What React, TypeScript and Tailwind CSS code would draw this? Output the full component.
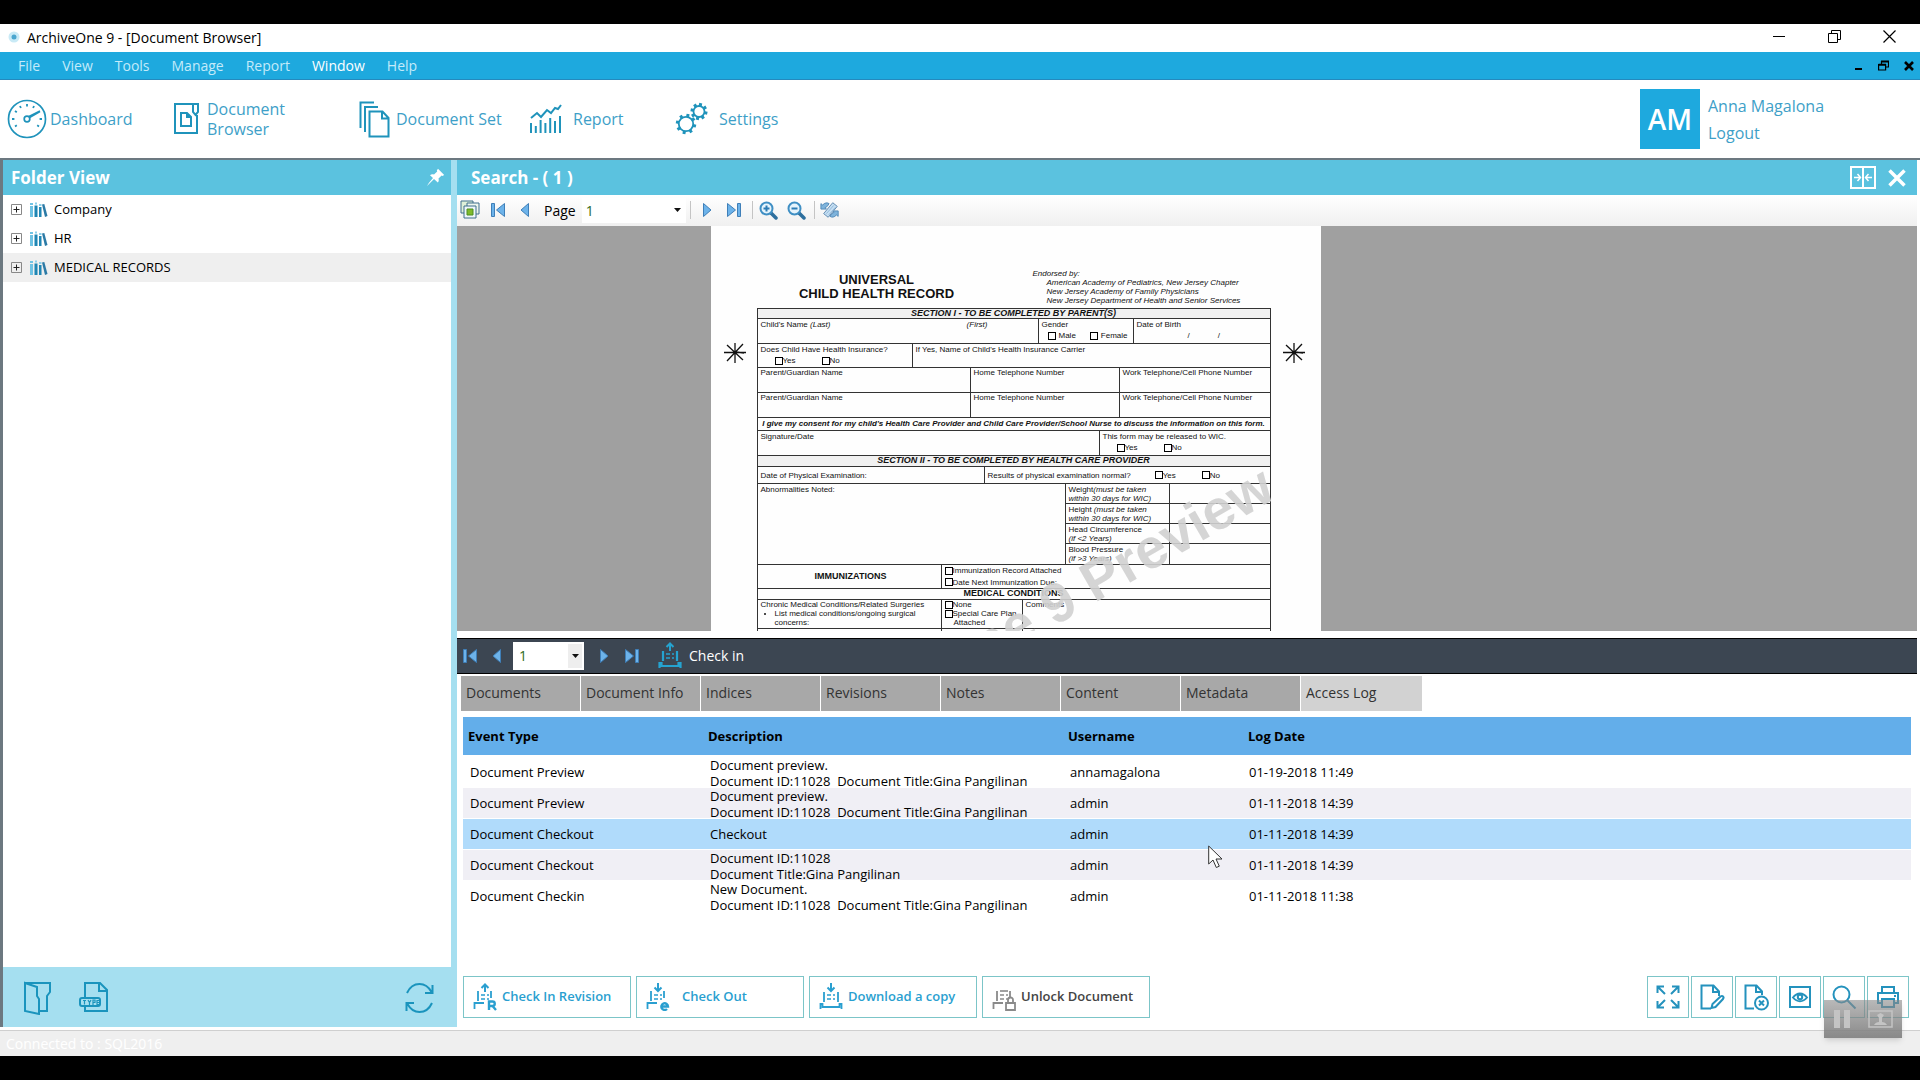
import React from "react";

type KidsProps = { children: React.ReactNode; className?: string };

/* ---------- icons ---------- */

function Svg({
  w,
  h,
  children,
  sw = 2,
  className = "",
}: {
  w: number;
  h: number;
  children: React.ReactNode;
  sw?: number;
  className?: string;
}) {
  return (
    <svg
      width={w}
      height={h}
      viewBox={`0 0 ${w} ${h}`}
      fill="none"
      stroke="currentColor"
      strokeWidth={sw}
      aria-hidden="true"
      className={`shrink-0 ${className}`}
    >
      {children}
    </svg>
  );
}

const GaugeIcon = () => (
  <Svg w={40} h={40} sw={1.7}>
    <circle cx="20" cy="20" r="18.5" />
    <circle cx="20" cy="20" r="2.8" />
    <path d="M22.5 18.5 33 12.5M22 17.5l11-5.5" />
    <path
      d="M20 5v2.4M13 7l.9 2M27 7l-.9 2M8 12l1.8 1.3M5 20h2.4M32.6 20H35M8 27.5l1.8-1.2M32 27.5l-1.8-1.2"
      strokeWidth="1.8"
    />
  </Svg>
);

const DocBrowserIcon = () => (
  <Svg w={28} h={34}>
    <path d="M20 2H2v29h22V13" />
    <path d="M20 2v8l2.5 3 2.5-3V2z" />
    <path d="M8 11h6l4 4v9H8zM14 11v4h4" />
  </Svg>
);

const DocSetIcon = () => (
  <Svg w={31} h={37}>
    <path d="M1.5 27V1.5H15M6 31V6h13" />
    <path d="M10.500 10.500h13l6 6.500v18.500h-19zM23 11v6.500h6" />
  </Svg>
);

const ReportIcon = () => (
  <Svg w={33} h={30}>
    <path d="M2 14l6-5 4 4 6-7 4 3 4-5 3 1 3-4" />
    <path d="M2 29V19M6.800 29v-7M11.600 29V16M16.400 29V19M21.200 29V14M26 29V17M31 29V12" />
  </Svg>
);

function Gear({ cx, cy, r }: { cx: number; cy: number; r: number }) {
  const teeth = [0, 45, 90, 135, 180, 225, 270, 315];
  return (
    <g>
      <circle cx={cx} cy={cy} r={r} />
      {teeth.map((a) => (
        <path
          key={a}
          d={`M${cx} ${cy - r}v-3`}
          strokeWidth="3"
          transform={`rotate(${a + 12} ${cx} ${cy})`}
        />
      ))}
    </g>
  );
}

const SettingsIcon = () => (
  <Svg w={34} h={34} sw={1.8}>
    <Gear cx={11} cy={22} r={7.200} />
    <Gear cx={24} cy={9.500} r={5.500} />
  </Svg>
);

const PinIcon = () => (
  <svg width="19" height="19" viewBox="0 0 19 19" fill="#fff" aria-hidden="true">
    <path d="M12 .8 18.200 7l-1.800.9-.8-.4-3.100 3.100c.5 1.600.3 3-.7 4L8 10.900 1 18l2-3.300L7 10 4 7.200c1-1 2.500-1.200 4-.7l3.200-3.100-.4-.9z" />
  </svg>
);

const BooksIcon = () => (
  <svg width="18" height="16" viewBox="0 0 18 16" aria-hidden="true" className="shrink-0">
    <path fill="#6fc3e4" d="M0 4h3v11H0zM0 1h3v2H0z" />
    <path fill="#1f86b4" d="M4.500 3.500h3V15h-3zM9 5h2.500v10H9z" />
    <path fill="#8bd0ea" d="M5 .5h2v2H5zM9 2h2.500v2H9z" />
    <path fill="#2b7aa6" d="m12 2.500 2.300-.6L17.500 14l-2.500 1z" />
  </svg>
);

const TwoWindowsIcon = () => (
  <svg width="20" height="20" viewBox="0 0 20 20" fill="none" aria-hidden="true">
    <path d="M1 1h12v12H1z" fill="#dff0d8" stroke="#3e6f8c" />
    <path d="M7 3h12v11H7z" fill="#eef6ee" stroke="#3e6f8c" />
    <path d="M4 6h12v12H4z" fill="#eef6fb" stroke="#3e6f8c" />
    <path d="M7 9h6v6H7z" fill="#7fba2c" stroke="#4c8d20" />
  </svg>
);

const FirstIcon = () => (
  <svg width="16" height="16" viewBox="0 0 16 16" className="shrink-0" aria-hidden="true">
    <path d="M1.500 1.500h3v13h-3zM14.500 1.500v13L6.500 8z" fill="#6db3ea" stroke="#3f7fb8" />
  </svg>
);
const PrevIcon = () => (
  <svg width="10" height="16" viewBox="0 0 10 16" className="shrink-0" aria-hidden="true">
    <path d="M8.500 1.500v13L1 8z" fill="#6db3ea" stroke="#3f7fb8" />
  </svg>
);
const NextIcon = () => (
  <svg width="10" height="16" viewBox="0 0 10 16" className="shrink-0" aria-hidden="true">
    <path d="M1.500 1.500v13L9 8z" fill="#6db3ea" stroke="#3f7fb8" />
  </svg>
);
const LastIcon = () => (
  <svg width="16" height="16" viewBox="0 0 16 16" className="shrink-0" aria-hidden="true">
    <path d="M11.500 1.500h3v13h-3zM1.500 1.500v13L9.500 8z" fill="#6db3ea" stroke="#3f7fb8" />
  </svg>
);

function ZoomGlass({ plus }: { plus: boolean }) {
  return (
    <svg width="19" height="19" viewBox="0 0 19 19" fill="none" aria-hidden="true">
      <path d="m12 12 5 5" stroke="#2d6f9e" strokeWidth="3.500" strokeLinecap="round" />
      <circle cx="7.500" cy="7.500" r="6" fill="#e6f4fc" stroke="#3f8fc4" strokeWidth="2" />
      <path d={plus ? "M4.500 7.500h6M7.500 4.500v6" : "M4.500 7.500h6"} stroke="#2d7cb5" strokeWidth="2" />
    </svg>
  );
}

const RotateIcon = () => (
  <svg width="20" height="20" viewBox="0 0 22 20" fill="none" aria-hidden="true">
    <path d="M1 9V3l2 1.500C5 2 8 1.500 10 3L8 6 5.500 7.500 7 9zM20 11v6l-2-1.500c-2 2.500-5 3-7 1.500l2-3 2.500-1.500L14 11z" fill="#7fb4dc" stroke="#4f88b6" />
    <path d="m4 14 10-12 5 4L9 18z" fill="#c4def2" stroke="#5a86ad" />
    <path d="m7 14 8-9M9.500 15.500 17 7" stroke="#8fb6d8" />
  </svg>
);

/* Tray with a page, topped by an optional arrow. */
function TrayIcon({
  arrow,
  badge,
  big = false,
}: {
  arrow: "up" | "down" | "none";
  badge?: "R" | "e" | "lock";
  big?: boolean;
}) {
  return (
    <svg
      width="25"
      height="28"
      viewBox="0 0 25 28"
      fill="none"
      stroke="currentColor"
      strokeWidth="2"
      aria-hidden="true"
      className="shrink-0"
    >
      <path d={badge ? "M5 8v10M18 8v7M1.500 26v-6h9.500" : "M5 9v10M19 9v10M1.500 26v-5h2v3h17v-3h2v5"} strokeWidth={big ? 2.2 : 1.8} />
      <path d="M8 12h4M8 16h4M14 12h2M14 16h2" strokeWidth="1.600" />
      {arrow === "up" && <path d="M12 1v8M8.500 5 12 1.500 15.500 5" />}
      {arrow === "down" && <path d="M12 0v8M8.500 4.500 12 8l3.500-3.500" />}
      {arrow === "none" && <path d="M8 8h8" strokeWidth="1.600" />}
      {badge === "R" && <path d="M16 27v-8.500h3.500a2.200 2.200 0 0 1 0 4.500H16m3.500 0 3.500 4" strokeWidth="2.400" />}
      {badge === "e" && <path d="M15.500 23.500H22a3.300 3.300 0 1 0-1 2.500" strokeWidth="2.400" />}
      {badge === "lock" && <path d="M14 20h9v7h-9zM16 20v-3a2.500 2.500 0 0 1 5 0v3" strokeWidth="1.800" />}
    </svg>
  );
}

/* ---------- small controls ---------- */

function IconButton({ label, children, className = "" }: KidsProps & { label: string }) {
  return (
    <button type="button" aria-label={label} className={`flex shrink-0 items-center justify-center ${className}`}>
      {children}
    </button>
  );
}

function ToolbarButton({ icon, children, className = "" }: KidsProps & { icon: React.ReactNode }) {
  return (
    <button type="button" className={`flex shrink-0 items-center text-left text-[16px] leading-5 whitespace-nowrap text-[#3e9fc8] ${className}`}>
      <span className="text-[#1f93bb]">{icon}</span>
      {children}
    </button>
  );
}

const Caret = () => (
  <svg width="7" height="4" viewBox="0 0 7 4" fill="#111" aria-hidden="true">
    <path d="M0 0h7L3.500 4z" />
  </svg>
);

/* ---------- scanned form ---------- */

function Check({ children, className = "" }: KidsProps) {
  return (
    <label className={`flex items-center leading-[9px] ${className}`}>
      <input type="checkbox" className="size-[8px] shrink-0 appearance-none border border-black bg-white" />
      {children}
    </label>
  );
}

function FormRow({ children, className = "" }: KidsProps) {
  return <div className={`flex shrink-0 border-b border-[#333] ${className}`}>{children}</div>;
}

function FormCell({ children, className = "" }: { children?: React.ReactNode; className?: string }) {
  return <div className={`shrink-0 border-l border-[#333] pl-[3px] first:border-l-0 ${className}`}>{children}</div>;
}

const Star = () => (
  <svg width="23" height="22" viewBox="0 0 23 22" fill="none" stroke="#111" strokeWidth="1.300" aria-hidden="true">
    <path d="M0 10.500h22M11 1v20M3 3l16 15M19 2 3 19M12 10l8 1" />
  </svg>
);

function MeasureRow({ a, b, last = false }: { a: React.ReactNode; b: string; last?: boolean }) {
  return (
    <div className={`flex h-[20px] ${last ? "" : "border-b border-[#333]"}`}>
      <div className="w-[103px] pt-px pl-[3px] leading-[9px]">
        {a}
        <br />
        <i>{b}</i>
      </div>
      <div className="flex-1 border-l border-[#333]" />
    </div>
  );
}

function ScannedForm() {
  return (
    <div className="relative h-full w-[610px] shrink-0 overflow-hidden bg-[#fefefe] pl-[46px] font-['Liberation_Sans',Arial,sans-serif] text-[8px] leading-[9px] text-[#111]">
      <div className="flex h-[82px] pt-[43px]">
        <h2 className="w-[240px] pt-[4px] text-center text-[13px] leading-[14px] font-bold">
          UNIVERSAL
          <br />
          CHILD HEALTH RECORD
        </h2>
        <p className="pl-[36px] italic">
          Endorsed by:
          <span className="block pl-[14px] whitespace-nowrap">
            American Academy of Pediatrics, New Jersey Chapter
            <br />
            New Jersey Academy of Family Physicians
            <br />
            New Jersey Department of Health and Senior Services
          </span>
        </p>
      </div>
      <div className="w-[514px] border-x border-t border-[#333]">
        <FormRow className="h-[10px] justify-center bg-[#f1f1f1] text-[9px] font-bold italic">SECTION I - TO BE COMPLETED BY PARENT(S)</FormRow>
        <FormRow className="h-[25px]">
          <FormCell className="flex w-[280px] justify-between pt-px pr-[50px]">
            <span>
              Child's Name <i>(Last)</i>
            </span>
            <i>(First)</i>
          </FormCell>
          <FormCell className="w-[95px] pt-px">
            Gender
            <div className="flex gap-[14px] pt-[2px] pl-[6px]">
              <Check className="gap-[3px]">Male</Check>
              <Check className="gap-[3px]">Female</Check>
            </div>
          </FormCell>
          <FormCell className="pt-px">
            Date of Birth
            <div className="flex gap-[28px] pt-[2px] pl-[51px]">
              <span>/</span>
              <span>/</span>
            </div>
          </FormCell>
        </FormRow>
        <FormRow className="h-[24px]">
          <FormCell className="w-[154px] pt-px">
            Does Child Have Health Insurance?
            <div className="flex gap-[26px] pt-[2px] pl-[14px]">
              <Check>Yes</Check>
              <Check>No</Check>
            </div>
          </FormCell>
          <FormCell className="pt-px">If Yes, Name of Child's Health Insurance Carrier</FormCell>
        </FormRow>
        {[1, 2].map((n) => (
          <FormRow key={n} className="h-[25px]">
            <FormCell className="w-[212px]">Parent/Guardian Name</FormCell>
            <FormCell className="w-[149px]">Home Telephone Number</FormCell>
            <FormCell>Work Telephone/Cell Phone Number</FormCell>
          </FormRow>
        ))}
        <FormRow className="h-[13px] justify-center pt-px font-bold italic">
          I give my consent for my child's Health Care Provider and Child Care Provider/School Nurse to discuss the information on this form.
        </FormRow>
        <FormRow className="h-[25px]">
          <FormCell className="w-[341px] pt-px">Signature/Date</FormCell>
          <FormCell className="pt-px">
            This form may be released to WIC.
            <div className="flex gap-[26px] pt-[2px] pl-[14px]">
              <Check>Yes</Check>
              <Check>No</Check>
            </div>
          </FormCell>
        </FormRow>
        <FormRow className="h-[11px] justify-center bg-[#f1f1f1] text-[9px] font-bold italic">
          SECTION II - TO BE COMPLETED BY HEALTH CARE PROVIDER
        </FormRow>
        <FormRow className="h-[17px] items-stretch">
          <FormCell className="flex w-[226px] items-center">Date of Physical Examination:</FormCell>
          <FormCell className="flex items-center">
            Results of physical examination normal?
            <Check className="ml-[24px]">Yes</Check>
            <Check className="ml-[26px]">No</Check>
          </FormCell>
        </FormRow>
        <FormRow className="h-[81px]">
          <FormCell className="w-[307px] pt-px">Abnormalities Noted:</FormCell>
          <div className="flex-1 border-l border-[#333]">
            <MeasureRow a={<>Weight<i>(must be taken</i></>} b="within 30 days for WIC)" />
            <MeasureRow a={<>Height <i>(must be taken</i></>} b="within 30 days for WIC)" />
            <MeasureRow a="Head Circumference" b="(if <2 Years)" />
            <MeasureRow a="Blood Pressure" b="(if >3 Years)" last />
          </div>
        </FormRow>
        <FormRow className="h-[24px]">
          <FormCell className="flex w-[183px] items-center justify-center text-[9px] font-bold">IMMUNIZATIONS</FormCell>
          <FormCell className="flex flex-col justify-around">
            <Check>Immunization Record Attached</Check>
            <Check>Date Next Immunization Due:</Check>
          </FormCell>
        </FormRow>
        <FormRow className="h-[11px] justify-center text-[9px] font-bold">MEDICAL CONDITIONS</FormRow>
        <FormRow className="h-[29px]">
          <FormCell className="w-[183px]">
            Chronic Medical Conditions/Related Surgeries
            <ul className="list-disc pl-[14px]">
              <li>
                List medical conditions/ongoing surgical
                <br />
                concerns:
              </li>
            </ul>
          </FormCell>
          <FormCell className="w-[81px]">
            <Check>None</Check>
            <Check>Special Care Plan</Check>
            <span className="pl-[9px]">Attached</span>
          </FormCell>
          <FormCell>Comments</FormCell>
        </FormRow>
        <FormRow className="h-[24px]">
          <FormCell className="w-[183px]" />
          <FormCell className="w-[81px]" />
          <FormCell />
        </FormRow>
      </div>
      <div className="absolute top-[116px] left-[13px]">
        <Star />
      </div>
      <div className="absolute top-[116px] left-[572px]">
        <Star />
      </div>
      <div className="absolute right-[38px] bottom-[126px] origin-bottom-right rotate-[-30deg] text-[56px] leading-none font-bold whitespace-nowrap text-[#d0d0d0]/90">
        ArchiveOne 9 Preview
      </div>
    </div>
  );
}

/* ---------- data ---------- */

const menuItems = ["File", "View", "Tools", "Manage", "Report", "Window", "Help"];
const folders = ["Company", "HR", "MEDICAL RECORDS"];
const tabs = ["Documents", "Document Info", "Indices", "Revisions", "Notes", "Content", "Metadata", "Access Log"];

const ids = "Document ID:11028";
const docTitle = "Document Title:Gina Pangilinan";
const logRows = [
  { type: "Document Preview", lines: ["Document preview.", `${ids}  ${docTitle}`], user: "annamagalona", date: "01-19-2018 11:49", bg: "bg-white" },
  { type: "Document Preview", lines: ["Document preview.", `${ids}  ${docTitle}`], user: "admin", date: "01-11-2018 14:39", bg: "bg-[#f0eff5]" },
  { type: "Document Checkout", lines: ["Checkout"], user: "admin", date: "01-11-2018 14:39", bg: "bg-[#b0dbfb]" },
  { type: "Document Checkout", lines: [ids, docTitle], user: "admin", date: "01-11-2018 14:39", bg: "bg-[#f0eff5]" },
  { type: "Document Checkin", lines: ["New Document.", `${ids}  ${docTitle}`], user: "admin", date: "01-11-2018 11:38", bg: "bg-white" },
];

/* ---------- page sections ---------- */

function TitleBar() {
  return (
    <header className="flex h-[28px] shrink-0 items-center bg-white pr-[24px] pb-[2px] pl-[8px] text-[14px] text-black">
      <svg width="12" height="14" viewBox="0 0 12 14" aria-hidden="true" className="mr-[7px]">
        <circle cx="6" cy="7" r="5.500" fill="#c9eaf6" />
        <circle cx="6" cy="7" r="2.500" fill="#4aa6cf" />
      </svg>
      <h1>ArchiveOne 9 - [Document Browser]</h1>
      <div className="ml-auto flex items-center gap-[42px] pb-[2px]">
        <IconButton label="Minimize">
          <Svg w={13} h={12} sw={1}>
            <path d="M0 6.500h12" />
          </Svg>
        </IconButton>
        <IconButton label="Restore">
          <Svg w={13} h={13} sw={1}>
            <path d="M.5 3.500h9v9h-9zM3.500 3.500v-3h9v9h-3" />
          </Svg>
        </IconButton>
        <IconButton label="Close">
          <Svg w={13} h={13} sw={1.2}>
            <path d="m.5.5 12 12M12.500.5l-12 12" />
          </Svg>
        </IconButton>
      </div>
    </header>
  );
}

function MenuBar() {
  return (
    <nav className="flex h-[28px] shrink-0 items-center gap-[22px] border-b border-[#2589bd] bg-[#1ea9de] pr-[6px] pl-[18px] text-[14px] text-[#c4ebfa]">
      {menuItems.map((m) => (
        <button key={m} type="button" className={m === "Window" ? "text-white" : ""}>
          {m}
        </button>
      ))}
      <div className="ml-auto flex items-center gap-[15px] text-black">
        <IconButton label="Minimize document">
          <Svg w={8} h={10} sw={2}>
            <path d="M0 8h7" />
          </Svg>
        </IconButton>
        <IconButton label="Restore document">
          <Svg w={11} h={11} sw={1.2}>
            <path d="M.6 4.500h7v5.500h-7zM3.500 4V1.500h7V7H8" />
            <path d="M.5 4.800h7.500M3 1.500h8" strokeWidth="2" />
          </Svg>
        </IconButton>
        <IconButton label="Close document">
          <Svg w={10} h={10} sw={2.6}>
            <path d="m1 1 8 8M9 1 1 9" />
          </Svg>
        </IconButton>
      </div>
    </nav>
  );
}

function MainToolbar() {
  return (
    <div className="flex h-[78px] shrink-0 items-center bg-white pl-[7px]">
      <ToolbarButton icon={<GaugeIcon />} className="w-[166px] gap-[3px]">
        Dashboard
      </ToolbarButton>
      <ToolbarButton icon={<DocBrowserIcon />} className="w-[186px] gap-[6px]">
        <span>
          Document
          <br />
          Browser
        </span>
      </ToolbarButton>
      <ToolbarButton icon={<DocSetIcon />} className="w-[170px] gap-[6px]">
        Document Set
      </ToolbarButton>
      <ToolbarButton icon={<ReportIcon />} className="w-[146px] gap-[11px]">
        Report
      </ToolbarButton>
      <ToolbarButton icon={<SettingsIcon />} className="gap-[10px]">
        Settings
      </ToolbarButton>
      <div className="ml-auto flex w-[280px] items-center gap-[8px]">
        <div className="flex size-[60px] items-center justify-center bg-[#1ea9de] text-[28px] font-semibold text-white">AM</div>
        <div className="flex flex-col items-start gap-[7px] text-[16px] leading-5 text-[#3e9fc8]">
          <span>Anna Magalona</span>
          <a href="#logout">Logout</a>
        </div>
      </div>
    </div>
  );
}

function FolderPanel() {
  return (
    <aside className="flex w-[454px] shrink-0 flex-col border-l-[3px] border-[#6c7880]">
      <div className="flex min-h-0 flex-1 flex-col border-r-[3px] border-[#a5dff0] bg-white">
        <div className="flex h-[35px] shrink-0 items-center justify-between bg-[#5bc2df] pr-[6px] pl-[8px] text-[17px] font-bold text-white">
          <h2>Folder View</h2>
          <IconButton label="Pin panel">
            <PinIcon />
          </IconButton>
        </div>
        <ul className="text-[13px] text-black">
          {folders.map((f, i) => (
            <li key={f} className={`flex h-[29px] items-center pl-[8px] ${i === 2 ? "bg-[#efefef]" : ""}`}>
              <IconButton label={`Expand ${f}`}>
                <Svg w={11} h={11} sw={1}>
                  <path d="M.5.5h10v10H.5z" stroke="#888" />
                  <path d="M2.500 5.500h6M5.500 2.500v6" stroke="#222" />
                </Svg>
              </IconButton>
              <span className="mr-[6px] ml-[8px]">
                <BooksIcon />
              </span>
              {f}
            </li>
          ))}
        </ul>
      </div>
      <div className="flex h-[60px] shrink-0 items-center bg-[#a5dff0] pt-px pr-[20px] pl-[20px] text-[#1a94bd]">
        <IconButton label="Open folder">
          <Svg w={28} h={34}>
            <path d="M2 2h25v9l-3 4v15h-7" />
            <path d="M2 2v28l14 3V18l-2-3V6z" />
          </Svg>
        </IconButton>
        <IconButton label="Document types" className="ml-[28px]">
          <Svg w={30} h={33}>
            <path d="M6 17V2h15l7 7v21H6v-4M20 2v8h8" />
            <rect x="1" y="17" width="20" height="8" rx="2" />
            <path d="M4 19.500h3M5.500 19.500v4M9 19l1.500 2.500L12 19M10.500 21v3M14 24v-5h2v2.500h-2M20 19.500h-2v4h2M18 21.500h2" strokeWidth="1.200" />
          </Svg>
        </IconButton>
        <IconButton label="Refresh" className="ml-auto">
          <Svg w={29} h={32}>
            <path d="M2 11C5 4.500 9.500 2 14.500 2c5 0 9 2.500 12 8M27.500 3v8H20" />
            <path d="M27 21c-3 6.500-7.500 9-12.500 9-5 0-9-2.500-12-8M1.500 29v-8H9" />
          </Svg>
        </IconButton>
      </div>
    </aside>
  );
}

const Divider = () => <span className="h-[18px] w-px shrink-0 bg-[#c4c4c4]" />;

function ViewerToolbar() {
  return (
    <div className="flex h-[31px] shrink-0 items-center bg-gradient-to-b from-white to-[#f0f0f0] pb-px pl-[3px] text-[14px] text-black">
      <IconButton label="Thumbnails">
        <TwoWindowsIcon />
      </IconButton>
      <IconButton label="First page" className="ml-[10px]">
        <FirstIcon />
      </IconButton>
      <IconButton label="Previous page" className="ml-[14px]">
        <PrevIcon />
      </IconButton>
      <label htmlFor="page-select" className="ml-[14px]">
        Page
      </label>
      <div className="relative ml-[6px] flex h-[25px] w-[104px] items-center bg-white">
        <select id="page-select" className="w-full appearance-none bg-transparent pl-[4px] text-[14px] text-[#2f6b1c]">
          <option>1</option>
        </select>
        <span className="pointer-events-none absolute right-[5px]">
          <Caret />
        </span>
      </div>
      <span className="ml-[4px] flex">
        <Divider />
      </span>
      <IconButton label="Next page" className="ml-[11px]">
        <NextIcon />
      </IconButton>
      <IconButton label="Last page" className="mr-[10px] ml-[14px]">
        <LastIcon />
      </IconButton>
      <Divider />
      <IconButton label="Zoom in" className="ml-[6px]">
        <ZoomGlass plus />
      </IconButton>
      <IconButton label="Zoom out" className="mr-[8px] ml-[9px]">
        <ZoomGlass plus={false} />
      </IconButton>
      <Divider />
      <IconButton label="Rotate" className="ml-[5px]">
        <RotateIcon />
      </IconButton>
    </div>
  );
}

function CheckInBar() {
  return (
    <div className="flex h-[36px] shrink-0 items-center border-y border-black bg-[#3c4652] pb-px pl-[5px] text-[14px] text-white">
      <IconButton label="First document">
        <FirstIcon />
      </IconButton>
      <IconButton label="Previous document" className="ml-[14px]">
        <PrevIcon />
      </IconButton>
      <div className="relative ml-[11px] flex h-[28px] w-[71px] items-center bg-white">
        <select aria-label="Document number" className="w-full appearance-none bg-transparent pl-[6px] text-[14px] text-[#2f6b1c]">
          <option>1</option>
        </select>
        <span className="pointer-events-none absolute inset-y-[2px] right-[2px] flex w-[14px] items-center justify-center bg-[#eeeeee]">
          <Caret />
        </span>
      </div>
      <IconButton label="Next document" className="ml-[15px]">
        <NextIcon />
      </IconButton>
      <IconButton label="Last document" className="ml-[15px]">
        <LastIcon />
      </IconButton>
      <button type="button" className="ml-[18px] flex items-center gap-[6px]">
        <span className="text-[#25a3d0]">
          <TrayIcon arrow="up" big />
        </span>
        Check in
      </button>
    </div>
  );
}

function AccessLogTable() {
  return (
    <table className="w-full table-fixed border-collapse text-left text-[13px] leading-[16px] text-black">
      <colgroup>
        <col className="w-[240px]" />
        <col className="w-[360px]" />
        <col className="w-[180px]" />
        <col />
      </colgroup>
      <thead>
        <tr className="h-[39px] border-b-2 border-white bg-[#63aeea] font-bold">
          {["Event Type", "Description", "Username", "Log Date"].map((h) => (
            <th key={h} scope="col" className="p-0 pl-[5px]">
              {h}
            </th>
          ))}
        </tr>
      </thead>
      <tbody>
        {logRows.map((r, i) => (
          <tr key={i} className={`h-[31px] border-b border-white ${r.bg}`}>
            <td className="p-0 pl-[7px]">{r.type}</td>
            <td className="p-0 pl-[7px]">
              <div className={`flex h-[30px] flex-col whitespace-pre ${r.lines.length === 1 ? "justify-center" : ""}`}>
                {r.lines.map((l) => (
                  <span key={l} className="shrink-0">
                    {l}
                  </span>
                ))}
              </div>
            </td>
            <td className="p-0 pl-[7px]">{r.user}</td>
            <td className="p-0 pl-[6px]">{r.date}</td>
          </tr>
        ))}
      </tbody>
    </table>
  );
}

function ActionButton({ icon, children, className = "" }: KidsProps & { icon: React.ReactNode }) {
  return (
    <button
      type="button"
      className={`flex h-[42px] w-[168px] shrink-0 items-center border border-[#7cc5c8] bg-white pl-[9px] text-[13px] font-semibold whitespace-nowrap ${className}`}
    >
      {icon}
      {children}
    </button>
  );
}

function SquareButton({ label, children }: KidsProps & { label: string }) {
  return (
    <IconButton label={label} className="size-[42px] border border-[#7cc5c8] bg-white text-[#2492bd]">
      {children}
    </IconButton>
  );
}

function ActionBar() {
  return (
    <div className="mt-auto flex items-center gap-[5px] pr-[8px] pb-[9px] pl-[6px]">
      <ActionButton icon={<TrayIcon arrow="up" badge="R" />} className="gap-[4px] text-[#2a9fd0]">
        Check In Revision
      </ActionButton>
      <ActionButton icon={<TrayIcon arrow="down" badge="e" />} className="gap-[11px] text-[#2a9fd0]">
        Check Out
      </ActionButton>
      <ActionButton icon={<TrayIcon arrow="down" />} className="gap-[4px] text-[#2a9fd0]">
        Download a copy
      </ActionButton>
      <ActionButton icon={<span className="text-[#8a8a8a]"><TrayIcon arrow="none" badge="lock" /></span>} className="gap-[4px] text-[#444]">
        Unlock Document
      </ActionButton>
      <div className="ml-auto flex gap-[2px]">
        <SquareButton label="Full screen">
          <Svg w={24} h={24}>
            <path d="M9 9 2 2M1.500 8V1.500H8M15 9l7-7M16 1.500h6.500V8M9 15l-7 7M1.500 16v6.500H8M15 15l7 7M16 22.500h6.500V16" />
          </Svg>
        </SquareButton>
        <SquareButton label="Edit document">
          <Svg w={26} h={28}>
            <path d="M12 25.500H2.500v-23h12l5.500 6V13M14 3v6h6" />
            <path d="m12.500 25 1-4 8-7.500c2-1.500 4 .5 2.500 2.500l-7.500 8z" />
          </Svg>
        </SquareButton>
        <SquareButton label="Delete document">
          <Svg w={26} h={28}>
            <path d="M11 25.500H2.500v-23h11l5.500 6V12M13 3v6h6" />
            <circle cx="18.500" cy="20" r="6.500" />
            <path d="m16 17.500 5 5M21 17.500l-5 5" />
          </Svg>
        </SquareButton>
        <SquareButton label="Preview">
          <Svg w={24} h={24}>
            <path d="M2 2h20v20H2z" />
            <path d="M5 12.500c4-5.500 10-5.500 14 0-4 5-10 5-14 0z" />
            <circle cx="12" cy="12" r="2.200" />
          </Svg>
        </SquareButton>
        <SquareButton label="Search">
          <Svg w={26} h={26}>
            <circle cx="10.500" cy="10.500" r="8" />
            <path d="m16 16 8.500 8.500" />
          </Svg>
        </SquareButton>
        <SquareButton label="Print">
          <Svg w={24} h={26}>
            <path d="M6 9V3h12v6M6 19H2V9h20v10h-4" />
            <path d="M6 15h12v8H6zM18 12h2" />
          </Svg>
        </SquareButton>
      </div>
    </div>
  );
}

function DocumentPanel() {
  return (
    <main className="flex min-w-0 flex-1 flex-col bg-white">
      <div className="flex h-[35px] shrink-0 items-center bg-[#5bc2df] pr-[11px] pl-[14px] text-[17px] font-bold text-white">
        <h2 className="whitespace-pre">Search - ( 1 )</h2>
        <IconButton label="Split view" className="ml-auto">
          <Svg w={26} h={23}>
            <path d="M1 1h24v21H1zM13 1v21" />
            <path d="M4 11.500h6M7.500 8l3 3.500-3 3.500M22 11.500h-6M18.500 8l-3 3.500 3 3.500" strokeWidth="1.500" />
          </Svg>
        </IconButton>
        <IconButton label="Close search" className="ml-[12px]">
          <Svg w={18} h={18} sw={3.5}>
            <path d="m1.500 1.500 15 15M16.500 1.500l-15 15" />
          </Svg>
        </IconButton>
      </div>
      <ViewerToolbar />
      <section aria-label="Document preview" className="flex min-h-0 flex-1 justify-center overflow-hidden bg-[#a0a0a0] pr-[343px]">
        <ScannedForm />
      </section>
      <section className="flex shrink-0 flex-col pt-[7px]">
        <CheckInBar />
        <div className="flex gap-px pt-[2px] pl-[4px]">
          {tabs.map((t) => (
            <button
              key={t}
              type="button"
              className={`h-[35px] pb-[2px] pl-[5px] text-left text-[14px] text-[#333] ${t === "Access Log" ? "w-[121px] bg-[#d2d2d2]" : "w-[119px] bg-[#a8a8a8]"}`}
            >
              {t}
            </button>
          ))}
        </div>
        <div className="h-[265px] pt-[6px] pr-[6px] pl-[6px]">
          <AccessLogTable />
        </div>
        <ActionBar />
      </section>
    </main>
  );
}

export default function App() {
  return (
    <div className="relative flex h-screen flex-col overflow-hidden border-y-[24px] border-black bg-white font-['Open_Sans','Noto_Sans',sans-serif]">
      <TitleBar />
      <MenuBar />
      <MainToolbar />
      <div className="flex min-h-0 flex-1 border-t-2 border-[#6c7880] pr-[3px]">
        <FolderPanel />
        <div className="w-[3px] shrink-0 bg-[#a5dff0]" />
        <DocumentPanel />
      </div>
      <footer className="mt-[3px] flex h-[26px] shrink-0 items-center border-t border-[#cfcfcf] bg-[#efefef] pl-[6px] text-[14px] text-white">
        Connected to : SQL2016
      </footer>

      <svg width="16" height="24" viewBox="0 0 16 24" className="absolute top-[821px] left-[1208px]" aria-hidden="true">
        <path d="M.7 1v18l4.300-4 3.300 7.500 3-1.300L8 14h6z" fill="#fff" stroke="#333" />
      </svg>

      <div className="absolute right-[18px] bottom-[18px] flex h-[38px] w-[78px] items-center justify-around bg-gradient-to-b from-[#8a8a8a]/60 to-[#7d7d7d]/90 shadow-md">
        <svg width="18" height="18" viewBox="0 0 18 18" fill="#c4c4c4" aria-hidden="true">
          <path d="M1 0h6v18H1zM11 0h6v18h-6z" />
        </svg>
        <svg width="25" height="18" viewBox="0 0 25 18" fill="none" stroke="#c4c4c4" strokeWidth="1.500" aria-hidden="true">
          <path d="M1 1h23v16H1z" />
          <path d="M6 15c1-2 3-3 5-3V8l-2-3 3.500-2L16 5l-2 3v4c2 0 4 1 5 3z" fill="#c4c4c4" stroke="none" />
        </svg>
      </div>
    </div>
  );
}
